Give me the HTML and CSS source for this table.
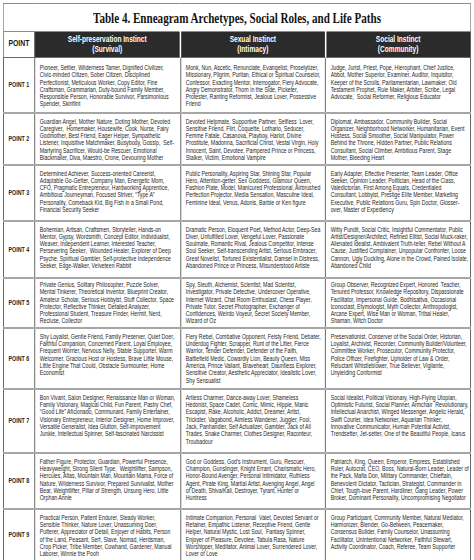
FILE: index.html
```html
<!DOCTYPE html>
<html lang="en">
<head>
<meta charset="utf-8">
<title>Table 4. Enneagram Archetypes, Social Roles, and Life Paths</title>
<link rel="stylesheet" href="styles.css">
</head>
<body>
<div class="page">
<div class="sheet">
<table class="ennea">
<colgroup>
<col class="c-point"><col class="c-self"><col class="c-sex"><col class="c-soc">
</colgroup>
<thead>
<tr class="r-title"><th colspan="4" class="title">Table 4. Enneagram Archetypes, Social Roles, and Life Paths</th></tr>
<tr class="r-head">
<th class="hp">POINT</th>
<th class="hd"><span class="hl">Self-preservation Instinct</span><span class="hl">(Survival)</span></th>
<th class="hd"><span class="hl">Sexual Instinct</span><span class="hl">(Intimacy)</span></th>
<th class="hd"><span class="hl">Social Instinct</span><span class="hl">(Community)</span></th>
</tr>
</thead>
<tbody>
<tr class="r1">
<td class="pt">POINT 1</td>
<td class="tx">Pioneer, Settler, Wilderness Tamer, Dignified Civilizer,<br>Civic-minded Citizen, Sober Citizen, Disciplined<br>Perfectionist, Meticulous Worker, Copy Editor, Fine<br>Craftsman, Grammarian, Duty-bound Family Member,<br>Responsible Person, Honorable Survivor, Parsimonious<br>Spender, Skinflint</td>
<td class="tx">Monk, Nun, Ascetic, Renunciate, Evangelist, Proselytizer,<br>Missionary, Pilgrim, Puritan, Ethical or Spiritual Counselor,<br>Confessor, Exacting Mentor, Interrogator, Fiery Advocate,<br>Angry Demonstrator, Thorn in the Side, Picketer,<br>Protester, Ranting Reformist, Jealous Lover, Possessive<br>Friend</td>
<td class="tx">Judge, Jurist, Priest, Pope, Hierophant, Chief Justice,<br>Abbot, Mother Superior, Examiner, Auditor, Inquisitor,<br>Keeper of the Scrolls, Parliamentarian, Lawmaker, Old<br>Testament Prophet, Rule Maker, Arbiter, Scribe, Legal<br>Advocate,&nbsp; Social Reformer, Religious Educator</td>
</tr>
<tr class="r2">
<td class="pt">POINT 2</td>
<td class="tx">Guardian Angel, Mother Nature, Doting Mother, Devoted<br>Caregiver,&nbsp; Homemaker, Housewife, Cook, Nurse, Fairy<br>Godmother, Best Friend, Eager Helper, Sympathetic<br>Listener, Inquisitive Matchmaker, Busybody, Gossip,&nbsp; Self-<br>Martyring Sacrificer, Would-be Rescuer, Emotional<br>Blackmailer, Diva, Maestro, Crone, Devouring Mother</td>
<td class="tx">Devoted Helpmate, Supportive Partner, Selfless&nbsp; Lover,<br>Sensitive Friend, Flirt, Coquette, Lothario, Seducer,<br>Femme Fatale, Casanova, Playboy, Harlot, Divine<br>Prostitute, Madonna, Sacrificial Christ, Vestal Virgin, Holy<br>Innocent, Saint, Devotee, Pampered Prince or Princess,<br>Stalker, Victim, Emotional Vampire</td>
<td class="tx">Diplomat, Ambassador, Community Builder, Social<br>Organizer, Neighborhood Networker, Humanitarian, Event<br>Hostess, Social Smoother, Social Manipulator, Power<br>Behind the Throne, Hidden Partner, Public Relations<br>Consultant, Social Climber, Ambitious Parent, Stage<br>Mother, Bleeding Heart</td>
</tr>
<tr class="r3">
<td class="pt">POINT 3</td>
<td class="tx">Determined Achiever, Success-oriented Careerist,<br>Adaptable Go-Getter, Company Man, Energetic Mom,<br>CFO, Pragmatic Entrepreneur, Hardworking Apprentice,<br>Ambitious Journeyman, Focused Striver, “Type A”<br>Personality, Comeback Kid, Big Fish in a Small Pond,<br>Financial Security Seeker</td>
<td class="tx">Public Personality, Aspiring Star, Shining Star, Popular<br>Hero, Attention-getter, Sex Goddess, Glamour Queen,<br>Fashion Plate, Model, Manicured Professional, Airbrushed<br>Perfection Projector, Media Sensation, Masculine Ideal,<br>Feminine Ideal, Venus, Adonis, Barbie or Ken figure</td>
<td class="tx">Early Adapter, Effective Presenter, Team Leader, Office<br>Seeker, Opinion Leader, Politician, Head of the Class,<br>Valedictorian, First Among Equals, Credentialed<br>Consultant, Lobbyist, Prestige Elite Member, Marketing<br>Executive, Public Relations Guru, Spin Doctor, Glosser-<br>over, Master of Expediency</td>
</tr>
<tr class="r4">
<td class="pt">POINT 4</td>
<td class="tx">Bohemian, Artisan, Craftsmen, Storyteller, Hands-on<br>Mentor, Gypsy, Wordsmith, Concept Editor, Individualist,<br>Weaver, Independent Learner, Interested Teacher,<br>Persevering Seeker,&nbsp; Wounded Healer, Explorer of Deep<br>Psyche, Spiritual Gambler, Self-protective Independence<br>Seeker, Edge-Walker, Velveteen Rabbit</td>
<td class="tx">Dramatic Person, Eloquent Poet, Method Actor, Deep-Sea<br>Diver, Unfulfilled Lover, Vengeful Lover, Passionate<br>Soulmate, Romantic Rival, Jealous Competitor, Intense<br>Soul Seeker, Self-transcending Artist, Serious Embracer,<br>Great Novelist, Tortured Existentialist, Damsel in Distress,<br>Abandoned Prince or Princess, Misunderstood Artiste</td>
<td class="tx">Witty Pundit, Social Critic, Insightful Commentator, Public<br>Artist/Designer/Architect, Refined Elitist, Social Muck-raker,<br>Alienated Idealist, Ambivalent Truth-teller, Rebel Without A<br>Cause, Justified Complainer, Unpopular Confronter, Loose<br>Cannon, Ugly Duckling, Alone in the Crowd, Pained Isolate,<br>Abandoned Child</td>
</tr>
<tr class="r5">
<td class="pt">POINT 5</td>
<td class="tx">Private Genius, Solitary Philosopher, Puzzle Solver,<br>Mental Tinkerer, Theoretical Inventor, Blueprint Creator,<br>Amateur Scholar, Serious Hobbyist, Stuff Collector, Space<br>Protector, Reflective Thinker, Detailed Analyzer,<br>Professional Student, Treasure Finder, Hermit, Nerd,<br>Recluse, Collector</td>
<td class="tx">Spy, Sleuth, Alchemist, Scientist, Mad Scientist,<br>Investigator, Private Detective, Undercover Operative,<br>Internet Wizard, Chat Room Enthusiast, Chess Player,<br>Private Tutor, Secret Photographer, Exchanger of<br>Confidences, Weirdo Voyeur, Secret Society Member,<br>Wizard of Oz</td>
<td class="tx">Group Observer, Recognized Expert, Honored&nbsp; Teacher,<br>Tenured Professor, Knowledge Repository, Dispassionate<br>Facilitator, Impersonal Guide, Bodhisattva, Occasional<br>Iconoclast, Etymologist, Myth Collector, Anthropologist,<br>Arcane Expert, Wise Man or Woman, Tribal Healer,<br>Shaman, Witch Doctor</td>
</tr>
<tr class="r6">
<td class="pt">POINT 6</td>
<td class="tx">Shy Loyalist, Gentle Friend, Family Preserver, Quiet Doer,<br>Faithful Companion, Concerned Parent, Loyal Employee,<br>Frequent Worrier, Nervous Nelly, Stable Supporter, Warm<br>Welcomer, Gracious Host or Hostess, Brave Little Mouse,<br>Little Engine That Could, Obstacle Surmounter, Home<br>Economist</td>
<td class="tx">Fiery Rebel, Combative Opponent, Feisty Friend, Debater,<br>Underdog Fighter, Scrapper, Runt of the Litter, Fierce<br>Warrior, Tender Defender, Defender of the Faith,<br>Battlefield Medic, Cowardly Lion, Beauty Queen, Miss<br>America, Prince Valiant, Braveheart, Dauntless Explorer,<br>Sensitive Creator, Aesthetic Appreciator, Idealistic Lover,<br>Shy Sensualist</td>
<td class="tx">Preservationist, Conserver of the Social Order, Historian,<br>Loyalist, Archivist, Recorder, Community Builder/Volunteer,<br>Committee Worker, Prosecutor, Community Protector,<br>Police Officer, Firefighter, Upholder of Law &amp; Order,<br>Reluctant Whistleblower, True Believer, Vigilante,<br>Unyielding Conformist</td>
</tr>
<tr class="r7">
<td class="pt">POINT 7</td>
<td class="tx">Bon Vivant, Salon Designer, Renaissance Man or Woman,<br>Family Visionary, Magical Child, Fun Parent, Pastry Chef,<br>“Good Life” Aficionado, Communard, Family Entertainer,<br>Visionary Entrepreneur, Interior Designer, Home Improver,<br>Versatile Generalist, Idea Glutton, Self-improvement<br>Junkie, Intellectual Spinner, Self-fascinated Narcissist</td>
<td class="tx">Artless Charmer, Dance-away Lover, Shameless<br>Hedonist, Space Cadet, Comic, Mimic, Hippie, Manic<br>Escapist, Rake, Alcoholic, Addict, Dreamer, Artist,<br>Trickster, Vagabond, Aimless Wanderer, Juggler, Fool,<br>Jack, Panhandler, Self Actualizer, Gambler, Jack of All<br>Trades, Snake Charmer, Clothes Designer, Raconteur,<br>Troubadour</td>
<td class="tx">Social Idealist, Political Visionary, High-Flying Utopian,<br>Optimistic Futurist, Social Planner, Armchair&nbsp; Revolutionary,<br>Intellectual Anarchist, Winged Messenger, Angelic Herald,<br>Swift Courier, Idea Networker, Aquarian Thinker,<br>Innovative Communicator, Human Potential Activist,<br>Trendsetter, Jet-setter, One of the Beautiful People, Icarus</td>
</tr>
<tr class="r8">
<td class="pt">POINT 8</td>
<td class="tx">Father Figure, Protector, Guardian, Powerful Presence,<br>Heavyweight, Strong Silent Type,&nbsp; Weightlifter, Sampson,<br>Hercules, Atlas, Mountain Man, Mountain Mama, Force of<br>Nature, Wilderness Survivor, Prepared Survivalist, Mother<br>Bear, Weightlifter, Pillar of Strength, Unsung Hero, Little<br>Orphan Annie</td>
<td class="tx">God or Goddess, God’s Instrument, Guru, Rescuer,<br>Champion, Gunslinger, Knight Errant, Charismatic Hero,<br>Honor-Bound Avenger, Personal Intimidator, Ruthless<br>Agent, Pirate King, Martial Artist, Avenging Angel, Angel<br>of Death, Shiva/Kali, Destroyer, Tyrant, Hunter or<br>Huntress</td>
<td class="tx">Patriarch, King, Queen, Emperor, Empress, Established<br>Ruler, Autocrat, CEO, Boss, Natural-Born Leader, Leader of<br>the Pack, Mafia Don, Military Commander, Chieftain,<br>Benevolent Dictator, Tactician, Strategist, Commander in<br>Chief, Tough-love Parent, Hardliner, Gang Leader, Power<br>Broker, Dominant Personality, Uncompromising Negotiator</td>
</tr>
<tr class="r9">
<td class="pt">POINT 9</td>
<td class="tx">Practical Person, Patient Endurer, Steady Worker,<br>Sensible Thinker, Nature Lover, Unassuming Doer,<br>Putterer, Appreciator of Detail, Enjoyer of Habits, Person<br>of the Land, Peasant, Serf, Slave, Nomad, Herdsman,<br>Crop Picker, Tribe Member, Cowhand, Gardener, Manual<br>Laborer, Winnie the Pooh</td>
<td class="tx">Intimate Companion, Personal&nbsp; Valet, Devoted Servant or<br>Retainer, Empathic Listener, Receptive Friend, Gentle<br>Helper, Natural Mystic, Lost Soul,&nbsp; Fantasy Spinner,<br>Enjoyer of Pleasure, Devotee, Tabula Rasa, Nature<br>Worshipper, Meditator, Animal Lover, Surrendered Lover,<br>Lover of Love</td>
<td class="tx">Group Participant, Community Member, Natural Mediator,<br>Harmonizer, Blender, Go-Between, Peacemaker,<br>Consensus Builder, Family Counselor, Unassuming<br>Facilitator, Unintentional Networker, Faithful Stewart,<br>Activity Coordinator, Coach, Referee, Team Supporter</td>
</tr>
</tbody>
</table>
</div>
</div>
</body>
</html>
```

FILE: styles.css
```css
html, body {
  margin: 0;
  padding: 0;
  background: #ffffff;
}

/* Window-sized frame that clips the condensed sheet. */
.page {
  width: 474px;
  height: 560px;
  overflow: hidden;
}

/* The source table is a horizontally condensed scan; the sheet is laid
   out at natural width and condensed to the frame width. */
.sheet {
  width: 620px;
  box-sizing: border-box;
  padding: 3px 4px 0 4px;
  transform: scaleX(0.7645);
  transform-origin: 0 0;
}

.ennea {
  width: 100%;
  table-layout: fixed;
  border-collapse: collapse;
  font-family: "Liberation Sans", Arial, sans-serif;
  color: #262626;
}

.c-point { width: 40.5px; }
.c-self { width: 191px; }
.c-sex { width: 189.5px; }

.r-title { height: 28px; }
.title {
  border: 1px solid #8c8c8c;
  font-family: "Liberation Serif", "Times New Roman", serif;
  font-weight: bold;
  font-size: 14.5px;
  color: #141414;
  text-align: center;
  vertical-align: middle;
  padding: 1px 0 0 0;
}

.r-head { height: 26px; }
.hp {
  border: 1px solid #6a6a6a;
  font-size: 9px;
  font-weight: bold;
  color: #1a1a1a;
  text-align: center;
  vertical-align: middle;
  padding: 0 0 4px 0;
}
.hd {
  border: 1px solid #6a6a6a;
  background: #2b2b2b;
  color: #ffffff;
  font-size: 8.6px;
  font-weight: bold;
  text-align: center;
  vertical-align: middle;
  padding: 0;
}
.hl {
  display: block;
  line-height: 9.4px;
}
.hd + .hd {
  border-left: 2px solid #ffffff;
}

.ennea td {
  border-left: 1px solid #3c3c3c;
  border-right: 1px solid #3c3c3c;
  border-bottom: 2px solid #a6a6a6;
}

.pt {
  font-size: 7px;
  font-weight: bold;
  color: #1e1e1e;
  text-align: center;
  vertical-align: middle;
  white-space: nowrap;
  padding: 0;
}

.tx {
  font-size: 6.85px;
  line-height: 7.3px;
  white-space: nowrap;
  vertical-align: top;
  padding: 4px 2px 2px 6.5px;
}

.r1 { height: 55px; }
.r1 .tx { padding-top: 6px; }
.r2 { height: 52px; }
.r3 { height: 56px; }
.r4 { height: 57px; }
.r5 { height: 47px; }
.r5 .tx { padding-top: 2.5px; }
.r6 { height: 61px; }
.r7 { height: 64px; }
.r8 { height: 56px; }
.r9 { height: 51px; }
```
